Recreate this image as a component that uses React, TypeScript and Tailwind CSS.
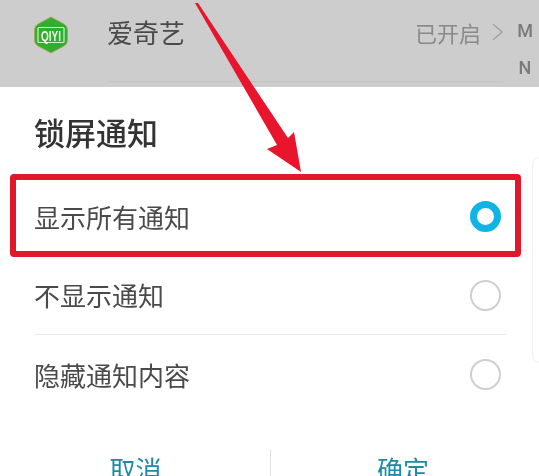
const options = [
  { label: "显示所有通知", selected: true, divider: false },
  { label: "不显示通知", selected: false, divider: true },
  { label: "隐藏通知内容", selected: false, divider: false },
];

function QiyiLogo() {
  return (
    <svg width="38" height="38" viewBox="0 0 38 38">
      <path d="M19 1 L32 8 Q35.5 10 35.5 14 L35.5 24 Q35.5 28 32 30 L19 37 L6 30 Q2.5 28 2.5 24 L2.5 14 Q2.5 10 6 8 Z" fill="#2fae2f" stroke="#a8a860" strokeWidth="1" />
      <rect x="6" y="11.5" width="26" height="15" rx="1" fill="none" stroke="#d4eecf" strokeWidth="1.2" />
      <text x="19" y="24.5" textAnchor="middle" fontSize="15" fontWeight="700" fill="#eef8ea" textLength="20" lengthAdjust="spacingAndGlyphs" fontFamily="'Liberation Sans', sans-serif">QIYI</text>
    </svg>
  );
}

function Radio({ selected }: { selected: boolean }) {
  if (selected) {
    return <div className="size-[31px] rounded-full border-[7px] border-[#0fb4e4] bg-white" />;
  }
  return <div className="size-[31px] rounded-full border-2 border-[#cfcfcf] bg-white" />;
}

export default function App() {
  return (
    <div className="relative h-[476px] w-[539px] overflow-hidden bg-white font-['Noto_Sans_CJK_SC',sans-serif] blur-[0.4px]">
      {/* dimmed list row behind the dialog */}
      <div className="flex h-[87px] bg-[#cdcdcd]">
        <div className="flex w-[107px] shrink-0 items-center pb-[17px] pl-[32px]">
          <QiyiLogo />
        </div>
        <div className="mb-[5px] flex flex-1 items-center justify-between border-b border-[#c2c2c2] pb-[17px]">
          <span className="text-[26px] leading-none text-[#4a4a4a]">爱奇艺</span>
          <div className="flex items-center gap-[11px]">
            <span className="text-[22px] leading-none text-[#8a8a8a]">已开启</span>
            <svg width="11" height="18" viewBox="0 0 11 18" fill="none">
              <path d="M1 1 L10 9 L1 17" stroke="#a5a5a5" strokeWidth="1.6" />
            </svg>
          </div>
        </div>
        <div className="-mt-[16px] flex w-[36px] shrink-0 flex-col items-center gap-[17px] pl-[8px] font-['Roboto',sans-serif] text-[18px] leading-[20px] font-medium text-[#7b7b7b]">
          <span>L</span>
          <span>M</span>
          <span>N</span>
        </div>
      </div>

      {/* dialog */}
      <div className="pt-[27px]">
        <h1 className="pl-[34px] text-[31px] leading-[36px] font-medium text-[#333333]">锁屏通知</h1>
        <div className="mt-[27px] pr-[33px] pl-[34px]">
          {options.map((o) => (
            <div
              key={o.label}
              className={`flex h-[79px] items-center justify-between pr-[5px] text-[26px] leading-none text-[#4a4a4a] ${o.divider ? "border-b border-[#ececec]" : ""}`}
            >
              <span>{o.label}</span>
              <Radio selected={o.selected} />
            </div>
          ))}
        </div>
        <div className="mt-[36px] flex h-[40px] text-[26px] leading-none text-[#1c8ba6]">
          <div className="flex w-[270px] justify-center pt-[6px] pl-[1px]">
            <span>取消</span>
          </div>
          <div className="flex flex-1 justify-center border-l border-[#dedede] pt-[6px] pr-[4px]">
            <span>确定</span>
          </div>
        </div>
      </div>

      {/* annotations drawn over the screenshot */}
      <div className="absolute top-[174px] left-[10px] h-[83px] w-[511px] rounded-[4px] border-[6px] border-[#e2172b]" />
      <div className="absolute top-[157px] left-[532px] h-[206px] w-[20px] rounded-[8px] border border-[#f0f0f0]" />
      <svg className="absolute top-0 left-0" width="539" height="180" viewBox="0 0 539 180">
        <path d="M195 3 L198 3 L288 138 L294 132 L301 172 L267 149 L277 145 Z" fill="#e8152d" />
      </svg>
    </div>
  );
}
